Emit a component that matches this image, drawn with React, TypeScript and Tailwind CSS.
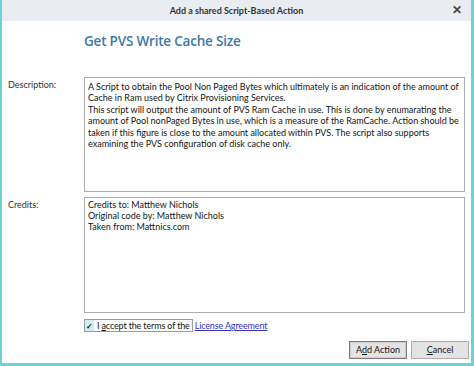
import React from 'react';

const font = { fontFamily: 'Lato, "Open Sans", sans-serif' };

const description = [
  'A Script to obtain the Pool Non Paged Bytes which ultimately is an indication of the amount of',
  'Cache in Ram used by Citrix Provisioning Services.',
  'This script will output the amount of PVS Ram Cache in use. This is done by enumarating the',
  'amount of Pool nonPaged Bytes in use, which is a measure of the RamCache. Action should be',
  'taken if this figure is close to the amount allocated within PVS. The script also supports',
  'examining the PVS configuration of disk cache only.',
];

const credits = ['Credits to: Matthew Nichols', 'Original code by: Matthew Nichols', 'Taken from: Mattnics.com'];

export default function App() {
  return (
    <div
      className="w-[474px] h-[366px] bg-white border-l-2 border-r-[3px] border-b-[3px] border-[#6dd3d6] flex flex-col overflow-hidden text-[#151515]"
      style={font}
    >
      {/* title bar */}
      <div className="h-[21px] bg-[#e9edf1] relative flex items-center justify-center shrink-0">
        <span className="text-[9px] font-bold text-[#333]">Add a shared Script-Based Action</span>
        <span className="absolute right-[9px] top-[4px] text-[12px] font-bold leading-none text-[#444]">✕</span>
      </div>

      <div className="pl-[82px] pt-[11px] h-[56px] shrink-0" style={{ fontFamily: '"Open Sans", sans-serif' }}>
        <h1 className="text-[13.5px] leading-[18px] font-semibold text-[#3d78a8] tracking-[-0.2px]">Get PVS Write Cache Size</h1>
      </div>

      <div className="grid grid-cols-[82px_1fr] pr-[6px]">
        <div className="pl-[6px] pt-[1px] text-[9px] text-[#333]">Description:</div>
        <div className="h-[115px] border border-[#acacac] px-[3px] pt-[3px] text-[9px] leading-[11.4px] whitespace-nowrap overflow-hidden">
          {description.map((l, i) => (
            <div key={i}>{l}</div>
          ))}
        </div>

        <div className="pl-[6px] pt-[6px] text-[9px] text-[#333]">Credits:</div>
        <div className="h-[116px] mt-[5px] border border-[#acacac] px-[3px] pt-[1px] text-[9px] leading-[11px]">
          {credits.map((l, i) => (
            <div key={i}>{l}</div>
          ))}
        </div>

        <div />
        <div className="flex items-center gap-[2px] mt-[6px] text-[9px]">
          <div className="flex items-center gap-[3px] border border-[#9a9a9a] h-[13px] pr-[2px]">
            <span className="w-[9px] h-[11px] bg-[#cfeff5] flex items-center justify-center text-[8px] font-bold leading-none text-[#111]">✓</span>
            <span className="whitespace-nowrap tracking-[-0.15px]">
              I <span className="underline">a</span>ccept the terms of the
            </span>
          </div>
          <span className="text-[#3333bb] underline tracking-[-0.15px]">License Agreement</span>
        </div>
      </div>

      <div className="flex justify-end gap-[4px] pr-[2px] mt-[8px]">
        <button className="w-[58px] h-[18px] border border-[#7a7a7a] bg-[#e3e3e3] text-[9px] leading-none outline outline-1 outline-[#cfcfcf] -outline-offset-2">
          A<span className="underline">d</span>d Action
        </button>
        <button className="w-[58px] h-[18px] border border-[#adadad] bg-[#e3e3e3] text-[9px] leading-none">
          <span className="underline">C</span>ancel
        </button>
      </div>
    </div>
  );
}
